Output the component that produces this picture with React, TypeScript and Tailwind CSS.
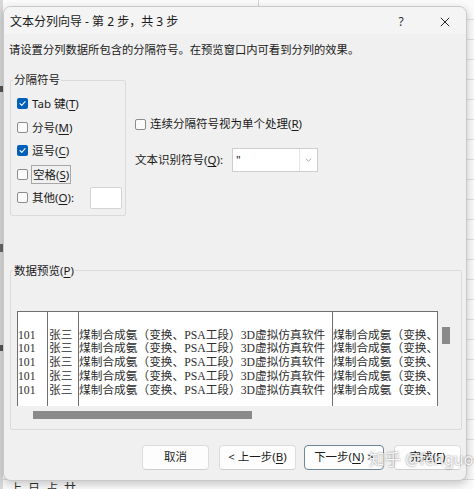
import type { ReactNode } from "react";

// Text-to-columns wizard (step 2) sitting over a spreadsheet.

const ui = "[font-family:'Noto_Sans','Noto_Sans_CJK_SC',sans-serif]";
const mono = "[font-family:'Liberation_Serif','Noto_Sans_CJK_SC',serif]";

function Key({ k }: { k: string }) {
  return <u className="underline-offset-[2px] decoration-[1px]">{k}</u>;
}

function Check({ checked }: { checked?: boolean }) {
  if (checked) {
    return (
      <span className="flex h-[11px] w-[11px] shrink-0 items-center justify-center rounded-[2px] bg-[#005fb8]">
        <svg viewBox="0 0 10 10" className="h-[9px] w-[9px]">
          <path
            d="M2.2 5.2 4.2 7.1 7.9 3"
            fill="none"
            stroke="white"
            strokeWidth="1.2"
            strokeLinecap="round"
            strokeLinejoin="round"
          />
        </svg>
      </span>
    );
  }
  return <span className="h-[11px] w-[11px] shrink-0 rounded-[2px] border border-[#8c8c8c] bg-[#fbfbfb]" />;
}

function Option({ checked, children }: { checked?: boolean; children: ReactNode }) {
  return (
    <div className="flex h-[23.5px] items-center gap-[4px] pl-[4px]">
      <Check checked={checked} />
      {children}
    </div>
  );
}

function Button({ children, focused, className = "" }: { children: ReactNode; focused?: boolean; className?: string }) {
  return (
    <button
      type="button"
      className={`flex h-[25px] items-center justify-center rounded-[4px] border bg-[#fdfdfd] text-[11.5px] leading-none text-[#1b1b1b] ${
        focused ? "border-[#6f8797]" : "border-[#dcdcdc] border-b-[#cfcfcf]"
      } ${className}`}
    >
      {children}
    </button>
  );
}

const rows = [0, 1, 2, 3, 4];
const longText = "煤制合成氨（变换、PSA工段）3D虚拟仿真软件";

function Column({ text, className }: { text: string; className: string }) {
  return (
    <div className={`overflow-hidden whitespace-nowrap pt-[17px] ${className}`}>
      {rows.map((r) => (
        <div key={r} className="h-[13.75px] leading-[13.75px]">
          {text}
        </div>
      ))}
    </div>
  );
}

export default function App() {
  return (
    <div
      className={`relative h-[489px] w-[474px] overflow-hidden bg-[#fbfbfb] bg-[repeating-linear-gradient(to_bottom,transparent_0,transparent_19px,#dedede_19px,#dedede_20px)] ${ui}`}
    >
      {/* spreadsheet fragments peeking out around the window */}
      <div className="absolute left-0 top-0 h-full w-[3px] bg-[#d8d8d8]" />
      <div className="absolute left-0 top-[86px] h-[6px] w-[3px] bg-[#555]" />
      <div className="absolute left-0 top-[244px] h-[8px] w-[3px] bg-[#666]" />
      <div className="absolute left-0 top-[345px] h-[6px] w-[3px] bg-[#555]" />
      <div className="absolute left-[258px] top-0 h-[6px] w-px bg-[#d0d0d0]" />
      <div className="absolute left-[10px] top-[481px] text-[12px] leading-[16px] tracking-[6px] text-[#333]">上日占廿</div>

      {/* dialog window */}
      <div className="absolute left-[3px] top-[6px] flex h-[475px] w-[464px] flex-col overflow-hidden rounded-[8px] border border-[#c9c9c9] bg-[#f0f0f0] shadow-[0_3px_10px_rgba(0,0,0,0.22)]">
        <div className="flex h-[27px] shrink-0 items-center bg-[#f4f4f4] pl-[6px] pt-[2px]">
          <span className="text-[12px] leading-[16px] text-[#1a1a1a]">文本分列向导 - 第 2 步，共 3 步</span>
          <span className="flex-1" />
          <span className="flex w-[44px] justify-center text-[12px] text-[#333]">?</span>
          <span className="flex w-[43px] justify-center">
            <svg viewBox="0 0 10 10" className="h-[10px] w-[10px]">
              <path d="M0.8 0.8 9.2 9.2M9.2 0.8 0.8 9.2" stroke="#222" strokeWidth="1" />
            </svg>
          </span>
        </div>

        <div className="mt-[8px] pl-[5px] text-[11.3px] leading-[16px] text-[#1a1a1a]">
          请设置分列数据所包含的分隔符号。在预览窗口内可看到分列的效果。
        </div>

        <div className="mt-[14px] flex items-start">
          <fieldset className="ml-[6px] w-[116px] rounded-[2px] border border-[#dadada] px-[2px] pb-[5px] pt-[4px] text-[11.5px] text-[#1a1a1a]">
            <legend className="px-[1px] leading-[16px]">分隔符号</legend>
            <Option checked>
              <span>
                Tab 键(<Key k="T" />)
              </span>
            </Option>
            <Option>
              <span>
                分号(<Key k="M" />)
              </span>
            </Option>
            <Option checked>
              <span>
                逗号(<Key k="C" />)
              </span>
            </Option>
            <Option>
              <span className="-ml-[1px] border border-[#a8a8a8] px-[1px] leading-[17px]">
                空格(<Key k="S" />)
              </span>
            </Option>
            <Option>
              <span className="w-[54px]">
                其他(<Key k="O" />):
              </span>
              <span className="h-[22px] w-[32px] rounded-[2px] border border-[#d4d4d4] bg-white" />
            </Option>
          </fieldset>

          <div className="ml-[9px] mt-[44px] text-[11.5px] text-[#1a1a1a]">
            <div className="flex h-[16px] items-center gap-[4px]">
              <Check />
              <span className="leading-[16px]">
                连续分隔符号视为单个处理(<Key k="R" />)
              </span>
            </div>
            <div className="mt-[16px] flex items-center">
              <span className="w-[97px] leading-[16px]">
                文本识别符号(<Key k="Q" />):
              </span>
              <div className="flex h-[24px] w-[86px] border border-[#cdcdcd] bg-white">
                <span className="flex-1 pl-[3px] leading-[22px]">"</span>
                <span className="flex w-[18px] items-center justify-center border-l border-[#e6e6e6]">
                  <svg viewBox="0 0 8 5" className="h-[4px] w-[7px]">
                    <path d="M0.6 0.8 4 4 7.4 0.8" fill="none" stroke="#8a8a8a" strokeWidth="0.9" />
                  </svg>
                </span>
              </div>
            </div>
          </div>
        </div>

        <fieldset className="ml-[6px] mt-[47px] w-[452px] rounded-[2px] border border-[#dadada] px-[2px] pb-[10px] text-[11.5px] text-[#1a1a1a]">
          <legend className="px-[1px] leading-[16px]">
            数据预览(<Key k="P" />)
          </legend>
          <div className="ml-[4px] mt-[32px] flex items-start">
            <div className={`flex h-[95px] w-[421px] border-l border-r border-t border-[#6f6f6f] bg-white text-[11.7px] text-[#2e2e2e] ${mono}`}>
              <Column text="101" className="w-[30px] border-r border-[#6f6f6f]" />
              <Column text="张三" className="w-[31px] border-r border-[#6f6f6f] pl-[1px]" />
              <Column text={longText} className="w-[254px] border-r border-[#6f6f6f]" />
              <Column text={longText} className="flex-1" />
            </div>
            <div className="ml-[4px] mt-[16px] h-[17px] w-[8px] bg-[#8a8a8a]" />
          </div>
          <div className="ml-[20px] mt-[5px] h-[8px] w-[219px] bg-[#8a8a8a]" />
        </fieldset>

        <div className="mt-[15px] flex pl-[138px]">
          <Button className="w-[67px]">取消</Button>
          <Button className="ml-[10px] w-[77px]">
            &lt; 上一步(<Key k="B" />)
          </Button>
          <Button focused className="ml-[8px] w-[80px]">
            下一步(<Key k="N" />) &gt;
          </Button>
          <Button className="ml-[10px] w-[67px]">
            完成(<Key k="F" />)
          </Button>
        </div>
      </div>

      {/* site watermark over the corner */}
      <div className="absolute left-[369px] top-[449px] text-[16px] leading-[20px] text-white/90 [text-shadow:0_0_2px_rgba(0,0,0,0.55)]">
        知乎 @fenguo
      </div>
    </div>
  );
}
